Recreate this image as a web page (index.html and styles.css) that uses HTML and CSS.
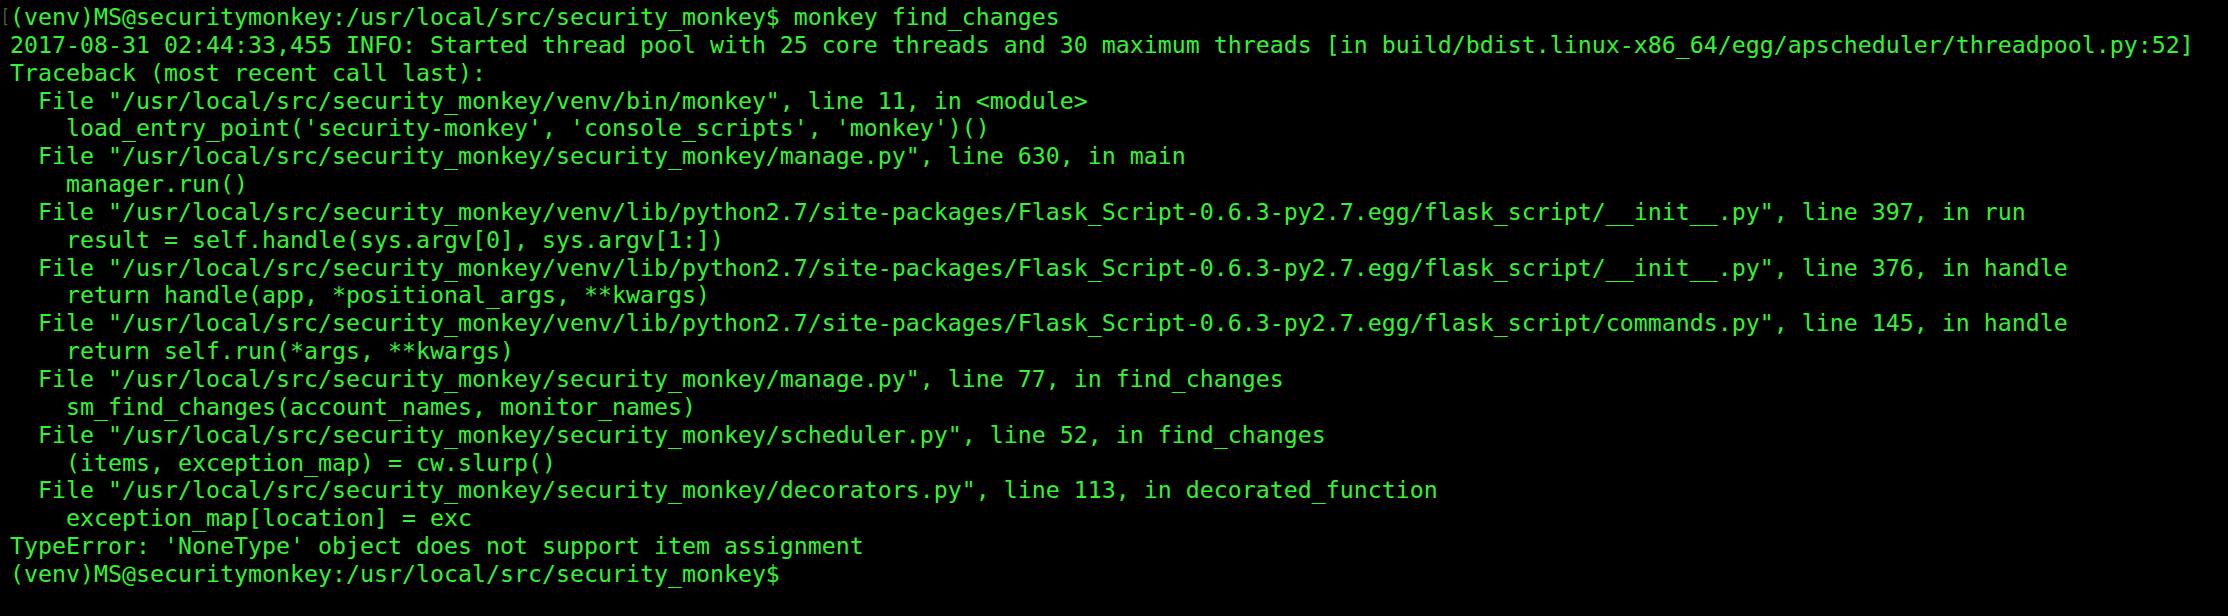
FILE: index.html
```html
<!DOCTYPE html>
<html>
<head>
<meta charset="utf-8">
<title>Terminal</title>
<link rel="stylesheet" href="styles.css">
</head>
<body>
<main class="terminal">
<pre class="output"><span class="line first"><span class="mark">[</span>(venv)MS@securitymonkey:/usr/local/src/security_monkey$ monkey find_changes</span>
2017-08-31 02:44:33,455 INFO: Started thread pool with 25 core threads and 30 maximum threads [in build/bdist.linux-x86_64/egg/apscheduler/threadpool.py:52]
Traceback (most recent call last):
  File "/usr/local/src/security_monkey/venv/bin/monkey", line 11, in &lt;module&gt;
    load_entry_point('security-monkey', 'console_scripts', 'monkey')()
  File "/usr/local/src/security_monkey/security_monkey/manage.py", line 630, in main
    manager.run()
  File "/usr/local/src/security_monkey/venv/lib/python2.7/site-packages/Flask_Script-0.6.3-py2.7.egg/flask_script/__init__.py", line 397, in run
    result = self.handle(sys.argv[0], sys.argv[1:])
  File "/usr/local/src/security_monkey/venv/lib/python2.7/site-packages/Flask_Script-0.6.3-py2.7.egg/flask_script/__init__.py", line 376, in handle
    return handle(app, *positional_args, **kwargs)
  File "/usr/local/src/security_monkey/venv/lib/python2.7/site-packages/Flask_Script-0.6.3-py2.7.egg/flask_script/commands.py", line 145, in handle
    return self.run(*args, **kwargs)
  File "/usr/local/src/security_monkey/security_monkey/manage.py", line 77, in find_changes
    sm_find_changes(account_names, monitor_names)
  File "/usr/local/src/security_monkey/security_monkey/scheduler.py", line 52, in find_changes
    (items, exception_map) = cw.slurp()
  File "/usr/local/src/security_monkey/security_monkey/decorators.py", line 113, in decorated_function
    exception_map[location] = exc
TypeError: 'NoneType' object does not support item assignment
(venv)MS@securitymonkey:/usr/local/src/security_monkey$</pre>
</main>
</body>
</html>
```
FILE: styles.css
```css
html, body {
  margin: 0;
  padding: 0;
  background: #000;
}
body {
  width: 2228px;
  height: 616px;
  overflow: hidden;
}
.terminal {
  padding: 3px 0 0 10px;
}
.output {
  margin: 0;
  font-family: "DejaVu Sans Mono", "Liberation Mono", monospace;
  font-size: 23.25px;
  line-height: 27.85px;
  color: #33f333;
  white-space: pre;
}
.line.first {
  position: relative;
}
.mark {
  position: absolute;
  left: -9px;
  top: 0;
  color: #4f604f;
  font-size: 20px;
  transform: scaleX(0.7);
  transform-origin: left center;
}
```
